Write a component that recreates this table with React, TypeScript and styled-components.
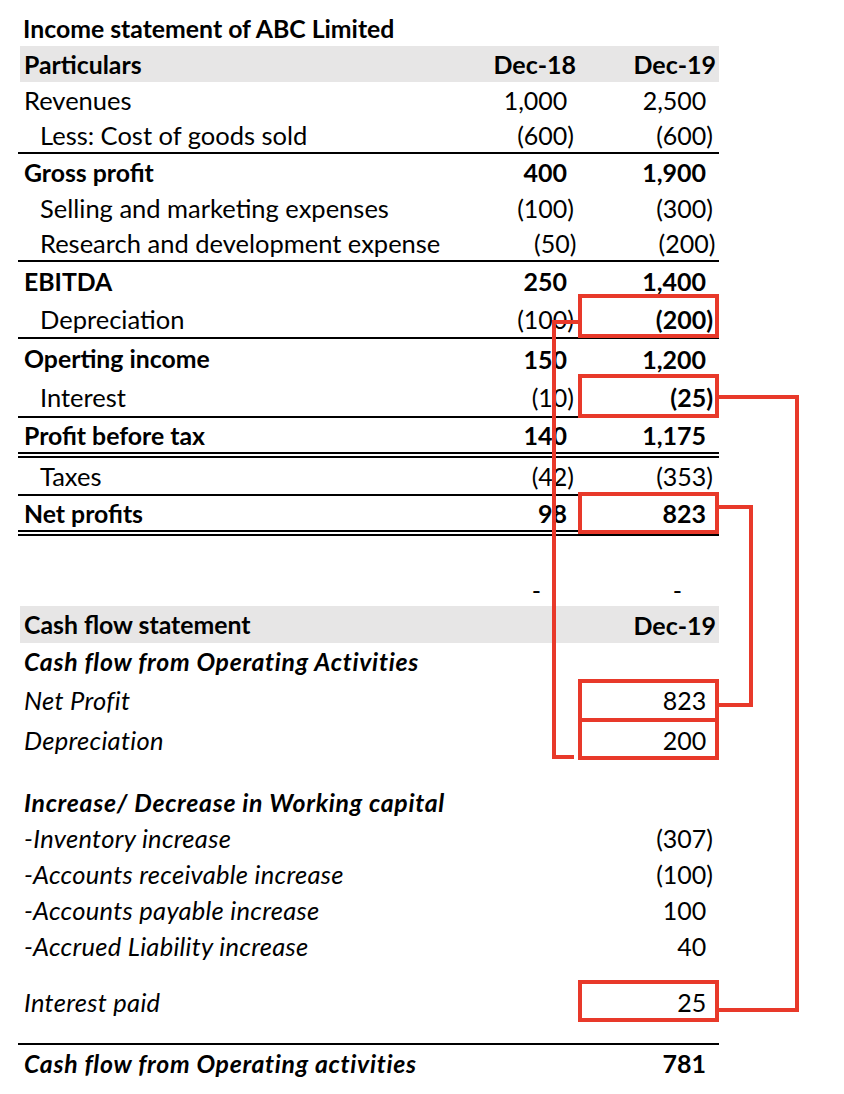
import React from 'react';
import styled, { createGlobalStyle } from 'styled-components';

const RED = '#e8392a';

const Global = createGlobalStyle`
  html, body { margin: 0; padding: 0; background: #ffffff; }
  body { font-family: Lato, "Noto Sans", sans-serif; color: #000; }
`;

const Page = styled.div`
  position: relative;
  width: 844px;
  height: 1094px;
  padding: 10px 0 0 18px;
  box-sizing: border-box;
  overflow: hidden;
`;

const Sheet = styled.div`
  width: 701px;
  display: flex;
  flex-direction: column;
  font-size: 25.5px;
`;

type RowProps = {
  $h: number;
  $band?: boolean;
  $rule?: 'single' | 'double';
  $ruleTop?: boolean;
};

const Row = styled.div<RowProps>`
  display: grid;
  grid-template-columns: 1fr 140px 141px;
  height: ${(p) => p.$h}px;
  box-sizing: border-box;
  background: ${(p) => (p.$band ? 'linear-gradient(to right, transparent 2px, #e7e6e6 2px)' : 'transparent')};
  border-bottom: ${(p) =>
    p.$rule === 'single' ? '2px solid #000' : p.$rule === 'double' ? '6px double #000' : 'none'};
  border-top: ${(p) => (p.$ruleTop ? '2px solid #000' : 'none')};
`;

const Title = styled.div`
  height: 36px;
  display: flex;
  align-items: center;
  padding-left: 5px;
  font-weight: 700;
  font-size: 24.8px;
`;

const Label = styled.div<{ $indent?: boolean; $bold?: boolean; $italic?: boolean }>`
  display: flex;
  align-items: center;
  padding-left: ${(p) => (p.$indent ? 22 : 6)}px;
  font-weight: ${(p) => (p.$bold ? 700 : 400)};
  font-size: ${(p) => (p.$bold ? '24.8px' : '25.5px')};
  font-style: ${(p) => (p.$italic ? 'italic' : 'normal')};
  letter-spacing: ${(p) => (p.$italic ? (p.$bold ? '0.7px' : '0.3px') : '0')};
  white-space: nowrap;
`;

const Cell = styled.div<{ $bold?: boolean; $pad: number; $boxed?: boolean; $boxTop?: number; $boxBottom?: number }>`
  position: relative;
  display: flex;
  align-items: center;
  justify-content: flex-end;
  padding-right: ${(p) => p.$pad}px;
  font-weight: ${(p) => (p.$bold ? 700 : 400)};
  font-size: 25px;
  white-space: nowrap;
  &::after {
    content: '';
    display: ${(p) => (p.$boxed ? 'block' : 'none')};
    position: absolute;
    left: 0;
    right: 0;
    top: ${(p) => p.$boxTop ?? -3}px;
    bottom: ${(p) => p.$boxBottom ?? -1}px;
    border: 4px solid ${RED};
    pointer-events: none;
  }
`;

const Ghost = styled.span`
  visibility: hidden;
`;

const Overlay = styled.svg`
  position: absolute;
  left: 0;
  top: 0;
  pointer-events: none;
`;

type Val = string | null;

const Num: React.FC<{ v: Val; col: 18 | 19; bold?: boolean; boxed?: boolean; boxTop?: number; boxBottom?: number; header?: boolean; dash?: boolean }> = ({
  v,
  col,
  bold,
  boxed,
  boxTop,
  boxBottom,
  header,
  dash,
}) => {
  const basePad = col === 18 ? 4 : 6;
  if (v === null) return <Cell $pad={basePad} />;
  if (header) return <Cell $pad={col === 18 ? 2 : 3} $bold>{v}</Cell>;
  if (dash) return <Cell $pad={37}>{v}</Cell>;
  const neg = v.startsWith('(');
  return (
    <Cell $pad={basePad} $bold={bold} $boxed={boxed} $boxTop={boxTop} $boxBottom={boxBottom}>
      {v}
      {!neg && <Ghost>)</Ghost>}
    </Cell>
  );
};

export default function App() {
  return (
    <Page>
      <Global />
      <Sheet>
        <Title>Income statement of ABC Limited</Title>
        <Row $h={36} $band>
          <Label $bold>Particulars</Label>
          <Num v="Dec-18" col={18} header />
          <Num v="Dec-19" col={19} header />
        </Row>
        <Row $h={36}>
          <Label>Revenues</Label>
          <Num v="1,000" col={18} />
          <Num v="2,500" col={19} />
        </Row>
        <Row $h={36} $rule="single">
          <Label $indent>Less: Cost of goods sold</Label>
          <Num v="(600)" col={18} />
          <Num v="(600)" col={19} />
        </Row>
        <Row $h={36}>
          <Label $bold>Gross profit</Label>
          <Num v="400" col={18} bold />
          <Num v="1,900" col={19} bold />
        </Row>
        <Row $h={36}>
          <Label $indent>Selling and marketing expenses</Label>
          <Num v="(100)" col={18} />
          <Num v="(300)" col={19} />
        </Row>
        <Row $h={36} $rule="single">
          <Label $indent>Research and development expense</Label>
          <Num v="(50)" col={18} />
          <Num v="(200)" col={19} />
        </Row>
        <Row $h={38}>
          <Label $bold>EBITDA</Label>
          <Num v="250" col={18} bold />
          <Num v="1,400" col={19} bold />
        </Row>
        <Row $h={39} $rule="single">
          <Label $indent>Depreciation</Label>
          <Num v="(100)" col={18} />
          <Num v="(200)" col={19} bold boxed boxTop={-6} boxBottom={-1} />
        </Row>
        <Row $h={39}>
          <Label $bold>Operting income</Label>
          <Num v="150" col={18} bold />
          <Num v="1,200" col={19} bold />
        </Row>
        <Row $h={40} $rule="single">
          <Label $indent>Interest</Label>
          <Num v="(10)" col={18} />
          <Num v="(25)" col={19} bold boxed boxTop={-4} boxBottom={-2} />
        </Row>
        <Row $h={40} $rule="double">
          <Label $bold>Profit before tax</Label>
          <Num v="140" col={18} bold />
          <Num v="1,175" col={19} bold />
        </Row>
        <Row $h={38} $rule="single">
          <Label $indent>Taxes</Label>
          <Num v="(42)" col={18} />
          <Num v="(353)" col={19} />
        </Row>
        <Row $h={40} $rule="double">
          <Label $bold>Net profits</Label>
          <Num v="98" col={18} bold />
          <Num v="823" col={19} bold boxed boxTop={-4} boxBottom={-4} />
        </Row>
        <Row $h={38}>
          <Label />
          <Num v={null} col={18} />
          <Num v={null} col={19} />
        </Row>
        <Row $h={32}>
          <Label />
          <Num v="-" col={18} dash />
          <Num v="-" col={19} dash />
        </Row>
        <Row $h={37} $band>
          <Label $bold>Cash flow statement</Label>
          <Num v={null} col={18} />
          <Num v="Dec-19" col={19} header />
        </Row>
        <Row $h={37}>
          <Label $bold $italic>Cash flow from Operating Activities</Label>
          <Num v={null} col={18} />
          <Num v={null} col={19} />
        </Row>
        <Row $h={40}>
          <Label $italic>Net Profit</Label>
          <Num v={null} col={18} />
          <Num v="823" col={19} boxed boxTop={-1} boxBottom={-2} />
        </Row>
        <Row $h={40}>
          <Label $italic>Depreciation</Label>
          <Num v={null} col={18} />
          <Num v="200" col={19} boxed boxTop={-2} boxBottom={0} />
        </Row>
        <Row $h={24}>
          <Label />
          <Num v={null} col={18} />
          <Num v={null} col={19} />
        </Row>
        <Row $h={36}>
          <Label $bold $italic>Increase/ Decrease in Working capital</Label>
          <Num v={null} col={18} />
          <Num v={null} col={19} />
        </Row>
        <Row $h={36}>
          <Label $italic>-Inventory increase</Label>
          <Num v={null} col={18} />
          <Num v="(307)" col={19} />
        </Row>
        <Row $h={36}>
          <Label $italic>-Accounts receivable increase</Label>
          <Num v={null} col={18} />
          <Num v="(100)" col={19} />
        </Row>
        <Row $h={36}>
          <Label $italic>-Accounts payable increase</Label>
          <Num v={null} col={18} />
          <Num v="100" col={19} />
        </Row>
        <Row $h={36}>
          <Label $italic>-Accrued Liability increase</Label>
          <Num v={null} col={18} />
          <Num v="40" col={19} />
        </Row>
        <Row $h={17}>
          <Label />
          <Num v={null} col={18} />
          <Num v={null} col={19} />
        </Row>
        <Row $h={41}>
          <Label $italic>Interest paid</Label>
          <Num v={null} col={18} />
          <Num v="25" col={19} boxed boxTop={-1} boxBottom={0} />
        </Row>
        <Row $h={21}>
          <Label />
          <Num v={null} col={18} />
          <Num v={null} col={19} />
        </Row>
        <Row $h={38} $ruleTop>
          <Label $bold $italic>Cash flow from Operating activities</Label>
          <Num v={null} col={18} />
          <Num v="781" col={19} bold />
        </Row>
      </Sheet>
      <Overlay width={844} height={1094} viewBox="0 0 844 1094">
        <g fill="none" stroke={RED} strokeWidth={4} strokeLinejoin="miter">
          <polyline points="580,322 554,322 554,757 574,757" />
          <polyline points="719,397 797,397 797,1010 719,1010" />
          <polyline points="719,507 751,507 751,705 719,705" />
        </g>
      </Overlay>
    </Page>
  );
}
